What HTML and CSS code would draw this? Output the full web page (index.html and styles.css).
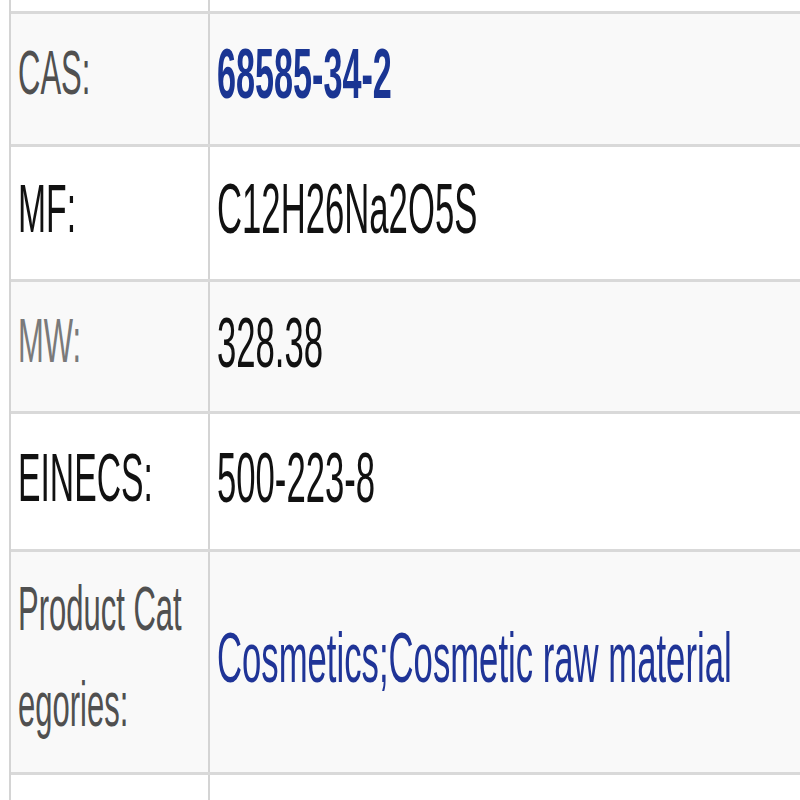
FILE: index.html
```html
<!DOCTYPE html>
<html>
<head>
<meta charset="utf-8">
<link rel="stylesheet" href="styles.css">
</head>
<body>
<div class="table">
  <div class="row r-top"><div class="cell"></div><div class="cell"></div></div>
  <div class="row r-cas alt">
    <div class="cell"><span class="txt lbl gray">CAS:</span></div>
    <div class="cell"><span class="txt val link bold">68585-34-2</span></div>
  </div>
  <div class="row r-mf">
    <div class="cell"><span class="txt lbl dark">MF:</span></div>
    <div class="cell"><span class="txt val">C12H26Na2O5S</span></div>
  </div>
  <div class="row r-mw alt">
    <div class="cell"><span class="txt lbl light">MW:</span></div>
    <div class="cell"><span class="txt val">328.38</span></div>
  </div>
  <div class="row r-ein">
    <div class="cell"><span class="txt lbl dark">EINECS:</span></div>
    <div class="cell"><span class="txt val">500-223-8</span></div>
  </div>
  <div class="row r-cat alt">
    <div class="cell"><span class="txt lbl gray wrap">Product Categories:</span></div>
    <div class="cell"><span class="txt val link2">Cosmetics;Cosmetic raw material</span></div>
  </div>
  <div class="row r-last"><div class="cell"></div><div class="cell"></div></div>
</div>
</body>
</html>
```
FILE: styles.css
```css
html, body {
  margin: 0;
  padding: 0;
  background: #ffffff;
  overflow: hidden;
}
body {
  font-family: "Liberation Sans", Arial, sans-serif;
}
.table {
  margin-left: 9px;
  border-left: 2px solid #d4d4d4;
}
.row {
  display: grid;
  grid-template-columns: 197px 1fr;
  border-bottom: 3px solid #d9d9d9;
  background: #ffffff;
}
.row.alt {
  background: #f9f9f9;
}
.cell {
  display: flex;
  align-items: center;
  padding: 0 12px 9px 7px;
  min-width: 0;
}
.cell + .cell {
  border-left: 2px solid #d4d4d4;
}
.r-top { height: 11px; }
.r-cas { height: 130px; }
.r-mf { height: 132px; }
.r-mw { height: 129px; }
.r-ein { height: 135px; }
.r-cat { height: 220px; }
.r-last { height: 25px; }
.r-top .cell, .r-last .cell { padding: 0; }

.txt {
  display: inline-block;
  transform: scaleY(2.05);
  transform-origin: center;
  line-height: 1.5;
  white-space: nowrap;
}
.txt.wrap {
  white-space: normal;
  word-break: break-all;
}
.lbl { font-size: 31px; }
.lbl.dark { font-size: 33.7px; color: #111111; }
.lbl.gray { color: #505050; }
.lbl.light { color: #7a7a7a; }
.val { font-size: 34.7px; color: #111111; }
.val.bold { font-weight: bold; font-size: 34.2px; }
.val.link { color: #1a3593; }
.val.link2 { color: #1f3497; }
```
